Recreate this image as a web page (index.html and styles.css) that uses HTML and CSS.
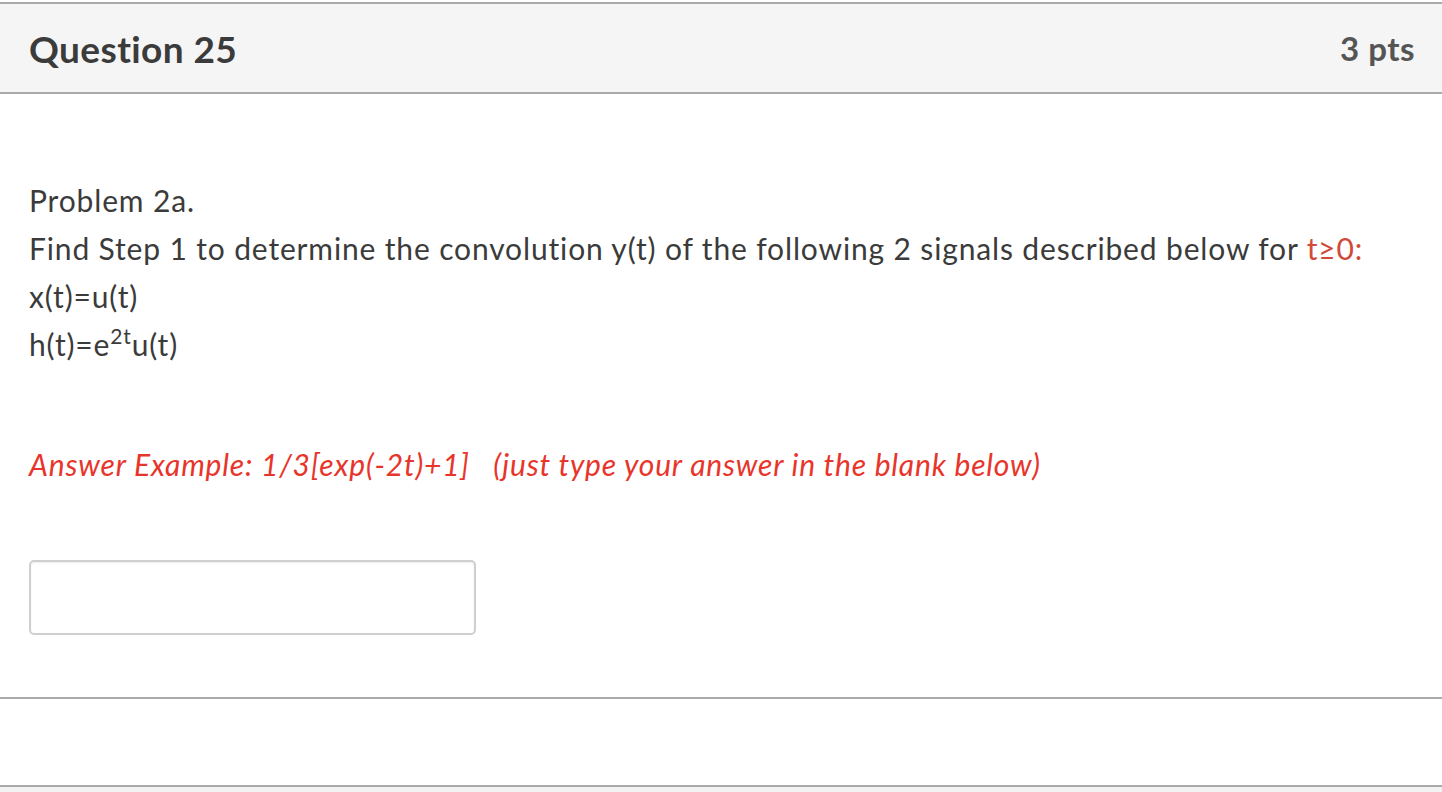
FILE: index.html
```html
<!DOCTYPE html>
<html>
<head>
<meta charset="utf-8">
<link rel="stylesheet" href="styles.css">
</head>
<body>
<div class="question">
  <div class="q-header">
    <h2 class="q-title">Question 25</h2>
    <span class="q-points">3 pts</span>
  </div>
  <div class="q-body">
    <p class="line">Problem 2a.</p>
    <p class="line">Find Step 1 to determine the convolution y(t) of the following 2 signals described below for <span class="red-a">t≥0:</span></p>
    <p class="line">x(t)=u(t)</p>
    <p class="line">h(t)=e<sup class="sup">2t</sup>u(t)</p>
    <p class="answer-example">Answer Example: 1/3[exp(-2t)+1]&nbsp;&nbsp; (just type your answer in the blank below)</p>
    <input class="answer-input" type="text">
  </div>
  <div class="q-footer"></div>
</div>
<div class="page-bottom"></div>
</body>
</html>
```

FILE: styles.css
```css
html, body {
  margin: 0;
  padding: 0;
  background: #fff;
  font-family: Lato, "Open Sans", sans-serif;
  color: #3b3b3b;
}
.question {
  padding-top: 2px;
}
.q-header {
  display: flex;
  justify-content: space-between;
  align-items: center;
  height: 88px;
  padding: 0 27px 0 29px;
  background: #f5f5f5;
  border-top: 2px solid #aaa;
  border-bottom: 2px solid #aaa;
}
.q-title {
  margin: 0;
  font-size: 37px;
  letter-spacing: 0.4px;
  font-weight: 700;
  color: #3b3b3b;
}
.q-points {
  font-size: 33px;
  letter-spacing: 0.5px;
  font-weight: 700;
  color: #555;
}
.q-body {
  padding: 82px 29px 62px 29px;
}
.line {
  margin: 0;
  font-size: 30px;
  letter-spacing: 0.85px;
  line-height: 48px;
}
.red-a {
  color: #d04a3a;
}
.sup {
  font-size: 21px;
  line-height: 0;
  vertical-align: 12px;
}
.answer-example {
  margin: 72px 0 0 0;
  font-size: 30px;
  letter-spacing: 0.8px;
  line-height: 48px;
  font-style: italic;
  color: #e8352b;
}
.answer-input {
  display: block;
  margin-top: 72px;
  width: 447px;
  height: 75px;
  box-sizing: border-box;
  border: 2px solid #cfcfcf;
  border-radius: 5px;
  background: #fff;
  box-shadow: inset 0 1px 2px rgba(0,0,0,0.08);
  font-family: Lato, sans-serif;
  font-size: 24px;
  padding: 0 12px;
}
.q-footer {
  height: 86px;
  border-top: 2px solid #aaa;
  border-bottom: 2px solid #aaa;
}
.page-bottom {
  height: 20px;
  background: #f3f3f3;
}
```
